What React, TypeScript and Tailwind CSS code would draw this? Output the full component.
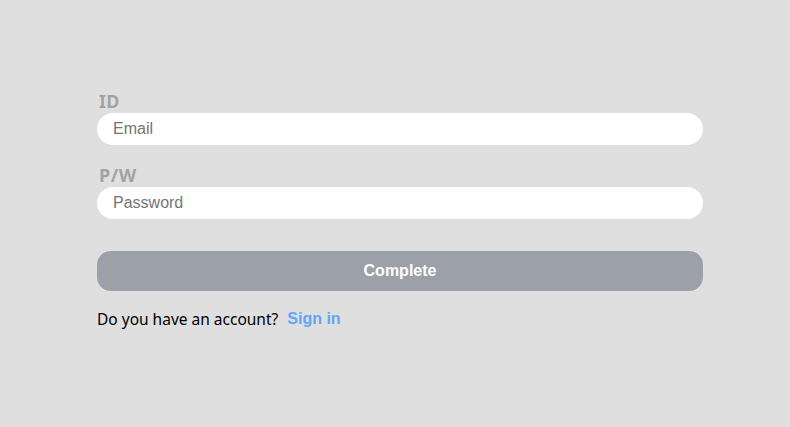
import React from "react";

export default function App() {
  return (
    <div className="w-[790px] h-[427px] bg-[#dfdfdf] flex flex-col pt-[89px] pl-[97px] pr-[87px]">
      <label className="pl-[2px] text-[18px] leading-[24px] font-bold text-[#a3a3a3] tracking-[0.3px] font-['Noto_Sans',sans-serif]">ID</label>
      <input
        placeholder="Email"
        className="h-[32px] w-full rounded-full bg-white px-[16px] text-[16px] text-black placeholder:text-[#757575] outline-none font-['Liberation_Sans',Arial,sans-serif]"
      />
      <label className="mt-[18px] pl-[2px] text-[18px] leading-[24px] font-bold text-[#a3a3a3] tracking-[0.5px] font-['Noto_Sans',sans-serif]">P/W</label>
      <input
        type="password"
        placeholder="Password"
        className="h-[32px] w-full rounded-full bg-white px-[16px] text-[16px] text-black placeholder:text-[#757575] outline-none font-['Liberation_Sans',Arial,sans-serif]"
      />
      <button className="mt-[32px] h-[40px] w-full rounded-[14px] bg-[#9ca0a8] text-white text-[16px] font-bold font-['Liberation_Sans',Arial,sans-serif]">
        Complete
      </button>
      <div className="mt-[18px] flex items-center text-[15.5px] leading-[20px] text-black font-['Noto_Sans',sans-serif]">
        <span>Do you have an account?</span>
        <span className="ml-[9px] font-bold text-[#60a5fa] text-[16px] font-['Liberation_Sans',Arial,sans-serif]">Sign in</span>
      </div>
    </div>
  );
}
